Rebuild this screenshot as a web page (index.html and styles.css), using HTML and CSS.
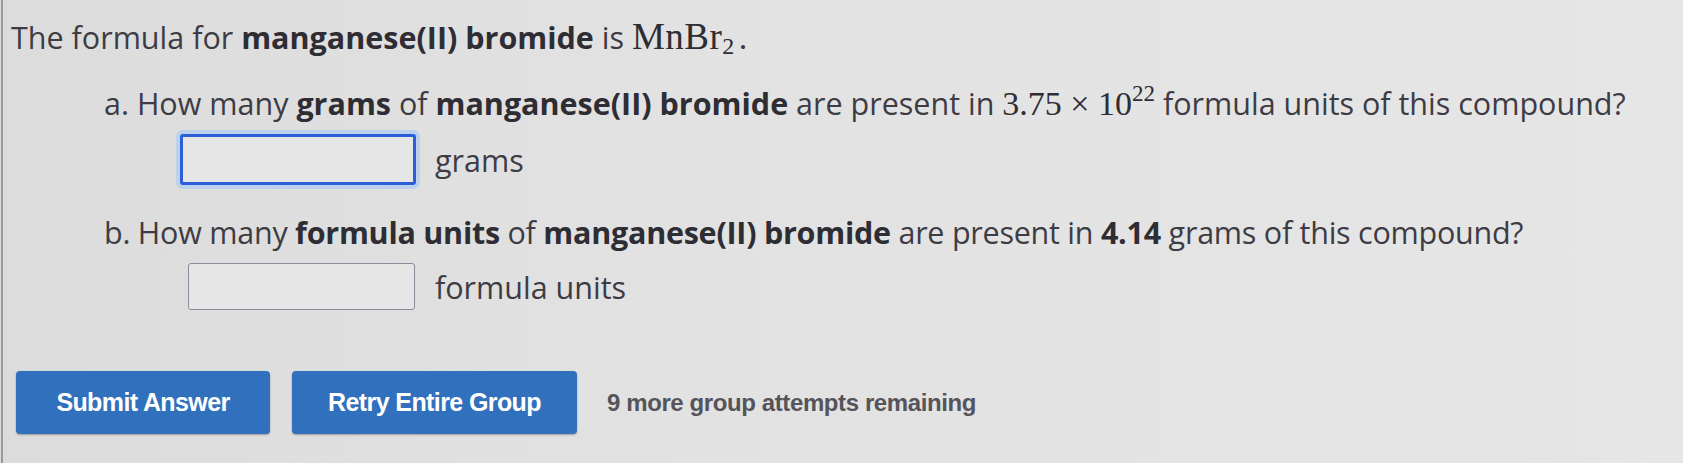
FILE: index.html
```html
<!DOCTYPE html>
<html>
<head>
<meta charset="utf-8">
<link rel="stylesheet" href="styles.css">
</head>
<body>
<div class="page">
  <p class="intro">The formula for <b>manganese(II) bromide</b> is <span class="math intro-math">MnBr<sub>2</sub></span><span class="period">.</span></p>
  <div class="part part-a">
    <p class="q">a. How many <b>grams</b> of <b>manganese(II) bromide</b> are present in <span class="math">3.75 × 10<sup>22</sup></span> formula units of this compound?</p>
    <div class="answer answer-a">
      <span class="input focused"></span>
      <span class="unit">grams</span>
    </div>
  </div>
  <div class="part part-b">
    <p class="q q-b">b. How many <b>formula units</b> of <b>manganese(II) bromide</b> are present in <b>4.14</b> grams of this compound?</p>
    <div class="answer answer-b">
      <span class="input plain"></span>
      <span class="unit">formula units</span>
    </div>
  </div>
  <div class="actions">
    <button class="btn btn-submit">Submit Answer</button>
    <button class="btn btn-retry">Retry Entire Group</button>
    <span class="remaining">9 more group attempts remaining</span>
  </div>
</div>
</body>
</html>
```

FILE: styles.css
```css
html, body {
  margin: 0;
  padding: 0;
  height: 100%;
}
body {
  background: linear-gradient(90deg, #dcdcdc 0%, #e2e2e2 40%, #e6e6e6 100%);
  font-family: "Open Sans", "Noto Sans", sans-serif;
  color: #3d3c44;
  overflow: hidden;
}
.page {
  height: 463px;
  box-sizing: border-box;
  border-left: 2px solid #9a9a9c;
  margin-left: 1px;
  padding: 17px 0 0 8px;
}
p { margin: 0; }
.intro, .q {
  font-size: 30.5px;
  line-height: 40px;
  white-space: nowrap;
}
.q-b { letter-spacing: -0.25px; }
b { font-weight: 700; color: #2e2d34; }
.math {
  font-family: "Liberation Serif", "DejaVu Serif", serif;
  font-size: 34px;
  color: #2e2d34;
}
.intro-math {
  font-size: 37px;
  letter-spacing: 0.5px;
}
.period {
  font-family: "Liberation Serif", serif;
  font-size: 34px;
  margin-left: 4px;
}
.math sub { font-size: 24px; vertical-align: -5px; line-height: 0; }
.math sup { font-size: 23px; vertical-align: 14px; line-height: 0; }
.part {
  padding-left: 93px;
}
.part-a { margin-top: 25px; }
.part-b { margin-top: 27px; }
.answer {
  display: flex;
  align-items: center;
  gap: 19px;
}
.answer-a {
  margin-top: 10px;
  margin-left: 76px;
}
.answer-b {
  margin-top: 11px;
  margin-left: 84px;
}
.input {
  display: block;
  box-sizing: border-box;
  background: #e6e6e6;
  border-radius: 3px;
}
.input.focused {
  width: 236px;
  height: 51px;
  border: 3px solid #2b5ed8;
  box-shadow: 0 0 0 4px #bcd2ec;
}
.input.plain {
  width: 227px;
  height: 47px;
  border: 1.5px solid #8d8b99;
  margin-right: 1px;
}
.unit {
  font-size: 30.5px;
  color: #3d3c44;
}
.actions {
  display: flex;
  align-items: center;
  margin-top: 61px;
  margin-left: 5px;
}
.btn {
  height: 63px;
  border: none;
  border-radius: 4px;
  background: #3170bd;
  color: #ffffff;
  font-family: "Liberation Sans", Arial, sans-serif;
  font-weight: 700;
  font-size: 25px;
  letter-spacing: -0.6px;
  box-shadow: 0 1px 2px rgba(0,0,0,0.3);
}
.btn-submit { width: 254px; }
.btn-retry { width: 285px; margin-left: 22px; }
.remaining {
  margin-left: 30px;
  font-family: "Liberation Sans", Arial, sans-serif;
  font-weight: 700;
  font-size: 24px;
  color: #55545b;
  letter-spacing: -0.4px;
}
```
